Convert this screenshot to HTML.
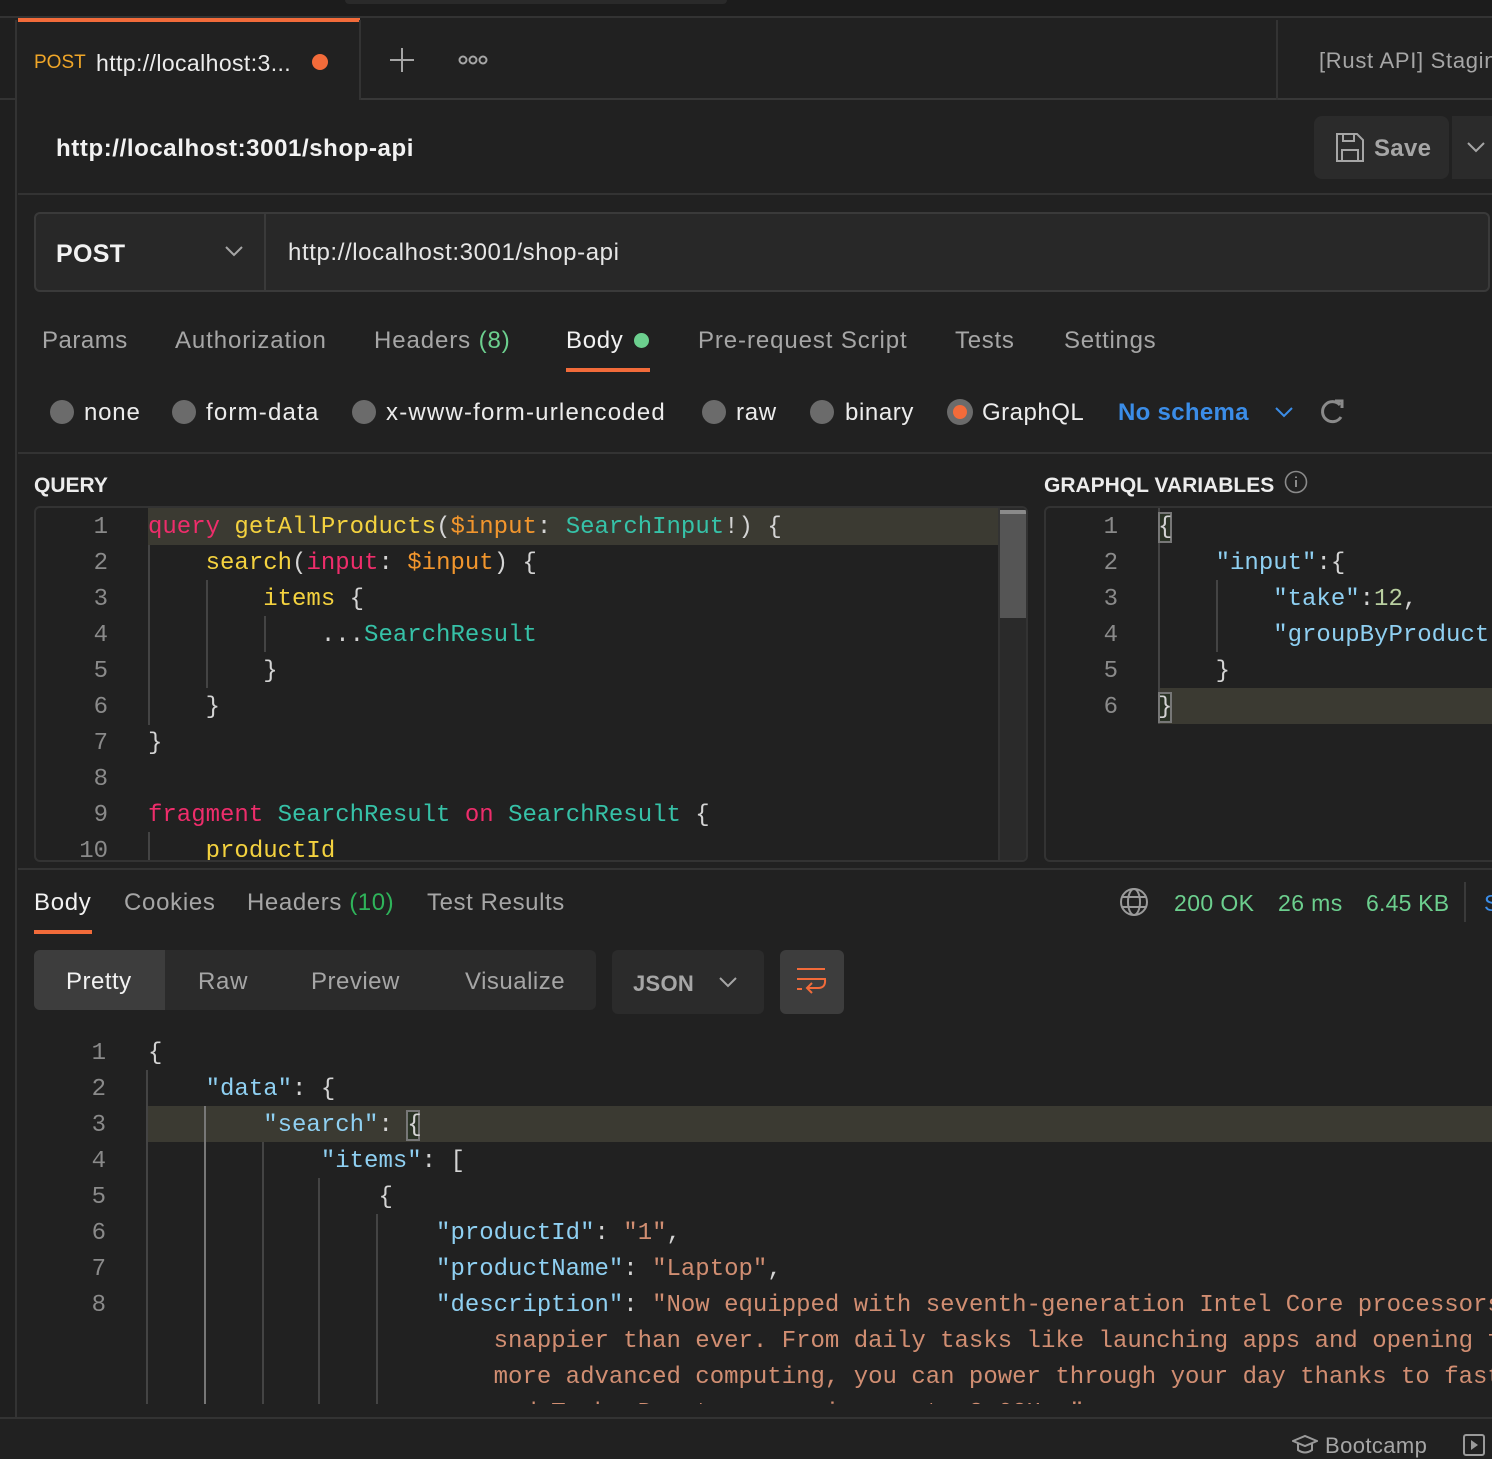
<!DOCTYPE html>
<html><head><meta charset="utf-8">
<style>
*{margin:0;padding:0;box-sizing:border-box}
body{width:1492px;height:1456px;background:#212121;overflow:hidden;position:relative;font-family:"Liberation Sans",sans-serif;color:#e6e6e6;letter-spacing:0.7px}
.a{position:absolute;white-space:nowrap}
pre.a{white-space:pre}
.mono{font-family:"Liberation Mono",monospace;font-size:24px;line-height:36px;letter-spacing:0}
.t{font-size:24px;color:#a6a6a6}
.ln{position:absolute;text-align:right;color:#8a8a8a;width:40px}
.pk{color:#ee2d6b}.yl{color:#f4d23f}.or{color:#f2962d}.tl{color:#36c2a8}.pu{color:#d4d4d4}
.ky{color:#8fd0f2}.st{color:#d18e72}.nm{color:#b9cfa0}
.guide{position:absolute;width:2px;background:#444}
.radio{position:absolute;width:24px;height:24px;border-radius:50%;background:#6b6b6b}
.rt{letter-spacing:1.2px}
</style></head><body>
<div class="a" style="left:0;top:0;width:1492px;height:18px;background:#1c1c1c;border-bottom:2px solid #333"></div>
<div class="a" style="left:345px;top:0;width:382px;height:4px;background:#2a2a2a;border-radius:0 0 6px 6px"></div>
<div class="a" style="left:0;top:20px;width:17px;height:1436px;background:#1f1f1f;border-right:2px solid #333"></div>
<div class="a" style="left:0;top:98px;width:17px;height:2px;background:#333"></div>
<div class="a" style="left:18px;top:18px;width:342px;height:4px;background:#f26b3a"></div>
<div class="a" style="left:359px;top:20px;width:2px;height:80px;background:#333"></div>
<div class="a" style="left:361px;top:98px;width:1131px;height:2px;background:#383838"></div>
<div class="a" style="left:1276px;top:20px;width:2px;height:80px;background:#333"></div>
<div class="a" style="left:34px;top:52px;font-size:19px;color:#f0a628;letter-spacing:0">POST</div>
<div class="a" style="left:96px;top:50px;font-size:23px;color:#ececec;letter-spacing:0.4px">http://localhost:3...</div>
<div class="a" style="left:312px;top:54px;width:16px;height:16px;border-radius:50%;background:#f26b3a"></div>
<svg class="a" style="left:388px;top:46px" width="28" height="28"><path d="M14 2V26M2 14H26" stroke="#a6a6a6" stroke-width="2"/></svg>
<svg class="a" style="left:458px;top:54px" width="32" height="12"><circle cx="5" cy="6" r="3.5" fill="none" stroke="#a6a6a6" stroke-width="2"/><circle cx="15" cy="6" r="3.5" fill="none" stroke="#a6a6a6" stroke-width="2"/><circle cx="25" cy="6" r="3.5" fill="none" stroke="#a6a6a6" stroke-width="2"/></svg>
<div class="a t" style="left:1319px;top:48px;font-size:22px">[Rust API] Staging</div>
<div class="a" style="left:56px;top:135px;font-size:24px;font-weight:bold;color:#f2f2f2;letter-spacing:0.6px">http://localhost:3001/shop-api</div>
<div class="a" style="left:1314px;top:116px;width:135px;height:63px;background:#2b2b2b;border-radius:8px"></div>
<svg class="a" style="left:1336px;top:133px" width="28" height="29"><path d="M1 1H21L27 7V28H1Z M7 1V8H18V1 M6 28V17H22V28" fill="none" stroke="#a6a6a6" stroke-width="2"/></svg>
<div class="a" style="left:1374px;top:135px;font-size:24px;font-weight:bold;color:#a6a6a6;letter-spacing:0.3px">Save</div>
<div class="a" style="left:1452px;top:116px;width:40px;height:63px;background:#2b2b2b"></div>
<svg class="a" style="left:1466px;top:140px" width="20" height="14"><path d="M2 3L10 11L18 3" fill="none" stroke="#a6a6a6" stroke-width="2"/></svg>
<div class="a" style="left:18px;top:193px;width:1474px;height:2px;background:#333"></div>
<div class="a" style="left:34px;top:212px;width:1456px;height:80px;background:#282828;border:2px solid #3a3a3a;border-radius:6px"></div>
<div class="a" style="left:264px;top:214px;width:2px;height:76px;background:#3a3a3a"></div>
<div class="a" style="left:56px;top:240px;font-size:25px;font-weight:bold;color:#f2f2f2;letter-spacing:0.3px">POST</div>
<svg class="a" style="left:224px;top:244px" width="20" height="14"><path d="M2 3L10 11L18 3" fill="none" stroke="#a6a6a6" stroke-width="2"/></svg>
<div class="a" style="left:288px;top:239px;font-size:24px;color:#e6e6e6;letter-spacing:0.6px">http://localhost:3001/shop-api</div>
<div class="a t" style="left:42px;top:327px;letter-spacing:0.5px">Params</div>
<div class="a t" style="left:175px;top:327px;letter-spacing:0.9px">Authorization</div>
<div class="a t" style="left:374px;top:327px;letter-spacing:0.9px">Headers <span style="color:#6ccf8e">(8)</span></div>
<div class="a" style="left:566px;top:327px;font-size:24px;color:#f2f2f2">Body</div>
<div class="a" style="left:634px;top:333px;width:15px;height:15px;border-radius:50%;background:#6ccf8e"></div>
<div class="a" style="left:566px;top:368px;width:84px;height:4px;background:#f26b3a"></div>
<div class="a t" style="left:698px;top:327px;letter-spacing:0.9px">Pre-request Script</div>
<div class="a t" style="left:955px;top:327px">Tests</div>
<div class="a t" style="left:1064px;top:327px">Settings</div>
<div class="radio" style="left:50px;top:400px"></div><div class="a rt" style="left:84px;top:399px;font-size:24px;color:#ececec;letter-spacing:0.8px">none</div>
<div class="radio" style="left:172px;top:400px"></div><div class="a rt" style="left:206px;top:399px;font-size:24px;color:#ececec">form-data</div>
<div class="radio" style="left:352px;top:400px"></div><div class="a rt" style="left:386px;top:399px;font-size:24px;color:#ececec">x-www-form-urlencoded</div>
<div class="radio" style="left:702px;top:400px"></div><div class="a rt" style="left:736px;top:399px;font-size:24px;color:#ececec;letter-spacing:0.7px">raw</div>
<div class="radio" style="left:810px;top:400px"></div><div class="a rt" style="left:845px;top:399px;font-size:24px;color:#ececec;letter-spacing:0.6px">binary</div>
<div class="radio" style="left:947px;top:399px;background:#6b6b6b;width:26px;height:26px"><div style="position:absolute;left:6px;top:6px;width:14px;height:14px;border-radius:50%;background:#f26b3a"></div></div>
<div class="a" style="left:982px;top:399px;font-size:24px;color:#ececec;letter-spacing:0.5px">GraphQL</div>
<div class="a" style="left:1118px;top:399px;font-size:24px;font-weight:bold;color:#3b8de8;letter-spacing:0.3px">No schema</div>
<svg class="a" style="left:1274px;top:405px" width="20" height="14"><path d="M2 3L10 11L18 3" fill="none" stroke="#3b8de8" stroke-width="2"/></svg>
<svg class="a" style="left:1318px;top:398px" width="28" height="28"><path d="M22 7A10 10 0 1 0 23 19" fill="none" stroke="#8a8a8a" stroke-width="3"/><path d="M17 3H24V10" fill="none" stroke="#8a8a8a" stroke-width="3"/></svg>
<div class="a" style="left:18px;top:452px;width:1474px;height:2px;background:#333"></div>
<div class="a" style="left:34px;top:474px;font-size:21px;font-weight:bold;color:#ececec;letter-spacing:0">QUERY</div>
<div class="a" style="left:1044px;top:474px;font-size:21px;font-weight:bold;color:#ececec;letter-spacing:0">GRAPHQL VARIABLES</div>
<svg class="a" style="left:1284px;top:470px" width="24" height="24"><circle cx="12" cy="12" r="10.5" fill="none" stroke="#8a8a8a" stroke-width="1.6"/><path d="M12 10V17M12 6.5V8" stroke="#8a8a8a" stroke-width="2"/></svg>
<div class="a" style="left:34px;top:506px;width:994px;height:356px;border:2px solid #333;border-radius:6px;overflow:hidden">
 <div class="a" style="left:112px;top:0;width:850px;height:37px;background:#3b3a32"></div>
 <div class="a" style="left:962px;top:0;width:30px;height:356px;background:#2a2a2a;border-left:2px solid #333"></div>
 <div class="a" style="left:964px;top:2px;width:26px;height:108px;background:#555"></div>
 <div class="a" style="left:964px;top:2px;width:26px;height:4px;background:#8a8a8a"></div>
 <div class="guide" style="left:112px;top:37px;height:180px"></div>
 <div class="guide" style="left:170px;top:72px;height:108px"></div>
 <div class="guide" style="left:228px;top:108px;height:36px"></div>
 <div class="guide" style="left:112px;top:324px;height:36px"></div>
 <div class="a mono" style="left:0;top:2px">
  <div class="ln" style="left:32px;top:0">1</div><div class="ln" style="left:32px;top:36px">2</div><div class="ln" style="left:32px;top:72px">3</div><div class="ln" style="left:32px;top:108px">4</div><div class="ln" style="left:32px;top:144px">5</div><div class="ln" style="left:32px;top:180px">6</div><div class="ln" style="left:32px;top:216px">7</div><div class="ln" style="left:32px;top:252px">8</div><div class="ln" style="left:32px;top:288px">9</div><div class="ln" style="left:32px;top:324px">10</div>
 </div>
 <pre class="a mono pu" style="left:112px;top:2px"><span class="pk">query</span> <span class="yl">getAllProducts</span>(<span class="or">$input</span>: <span class="tl">SearchInput</span>!) {
    <span class="yl">search</span>(<span class="pk">input</span>: <span class="or">$input</span>) {
        <span class="yl">items</span> {
            ...<span class="tl">SearchResult</span>
        }
    }
}

<span class="pk">fragment</span> <span class="tl">SearchResult</span> <span class="pk">on</span> <span class="tl">SearchResult</span> {
    <span class="yl">productId</span></pre>
</div>
<div class="a" style="left:1044px;top:506px;width:460px;height:356px;border:2px solid #333;border-radius:6px;overflow:hidden">
 <div class="a" style="left:112px;top:180px;width:360px;height:36px;background:#3b3a32"></div>
 <div class="guide" style="left:112px;top:0;height:216px;background:#444"></div>
 <div class="guide" style="left:170px;top:72px;height:72px"></div>
 <div class="a" style="left:112px;top:4px;width:14px;height:31px;border:2px solid #777;background:#2a3325"></div>
 <div class="a" style="left:112px;top:184px;width:14px;height:31px;border:2px solid #777;background:#2a3325"></div>
 <div class="a mono" style="top:2px">
  <div class="ln" style="left:32px;top:0">1</div><div class="ln" style="left:32px;top:36px">2</div><div class="ln" style="left:32px;top:72px">3</div><div class="ln" style="left:32px;top:108px">4</div><div class="ln" style="left:32px;top:144px">5</div><div class="ln" style="left:32px;top:180px">6</div>
 </div>
 <pre class="a mono pu" style="left:112px;top:2px">{
    <span class="ky">"input"</span>:{
        <span class="ky">"take"</span>:<span class="nm">12</span>,
        <span class="ky">"groupByProduct"</span>:true
    }
}</pre>
</div>
<div class="a" style="left:18px;top:868px;width:1474px;height:2px;background:#333"></div>
<div class="a" style="left:34px;top:889px;font-size:24px;color:#f2f2f2">Body</div>
<div class="a" style="left:34px;top:930px;width:58px;height:4px;background:#f26b3a"></div>
<div class="a t" style="left:124px;top:889px">Cookies</div>
<div class="a t" style="left:247px;top:889px;letter-spacing:0.6px">Headers <span style="color:#2fb35a">(10)</span></div>
<div class="a t" style="left:427px;top:889px;letter-spacing:0.6px">Test Results</div>
<svg class="a" style="left:1119px;top:887px" width="30" height="30"><g fill="none" stroke="#9a9a9a" stroke-width="2"><circle cx="15" cy="15" r="13"/><ellipse cx="15" cy="15" rx="6" ry="13"/><path d="M3 10H27M3 20H27"/></g></svg>
<div class="a" style="left:1174px;top:890px;font-size:23px;color:#6ccf8e;letter-spacing:0.4px">200 OK</div>
<div class="a" style="left:1278px;top:890px;font-size:23px;color:#6ccf8e;letter-spacing:0.4px">26 ms</div>
<div class="a" style="left:1366px;top:890px;font-size:23px;color:#6ccf8e;letter-spacing:0.2px">6.45 KB</div>
<div class="a" style="left:1464px;top:882px;width:2px;height:40px;background:#3a3a3a"></div>
<div class="a" style="left:1484px;top:890px;font-size:23px;color:#3b8de8">S</div>
<div class="a" style="left:34px;top:950px;width:562px;height:60px;background:#2b2b2b;border-radius:6px"></div>
<div class="a" style="left:34px;top:950px;width:131px;height:60px;background:#3d3d3d;border-radius:6px 0 0 6px"></div>
<div class="a" style="left:66px;top:968px;font-size:24px;color:#f2f2f2;letter-spacing:0.5px">Pretty</div>
<div class="a t" style="left:198px;top:968px">Raw</div>
<div class="a t" style="left:311px;top:968px;letter-spacing:0.5px">Preview</div>
<div class="a t" style="left:465px;top:968px;letter-spacing:0.5px">Visualize</div>
<div class="a" style="left:612px;top:950px;width:152px;height:64px;background:#2b2b2b;border-radius:6px"></div>
<div class="a" style="left:633px;top:971px;font-size:22px;font-weight:bold;color:#a6a6a6;letter-spacing:0.3px">JSON</div>
<svg class="a" style="left:718px;top:975px" width="20" height="14"><path d="M2 3L10 11L18 3" fill="none" stroke="#a6a6a6" stroke-width="2"/></svg>
<div class="a" style="left:780px;top:950px;width:64px;height:64px;background:#3d3d3d;border-radius:6px"></div>
<svg class="a" style="left:796px;top:966px" width="32" height="32"><g fill="none" stroke="#f26b3a" stroke-width="2"><path d="M1 3H29M1 13H29Q30 22 22 22H12M16 17L11 22L16 27M1 23H6"/></g></svg>
<div class="a" style="left:18px;top:1034px;width:1474px;height:370px;overflow:hidden">
 <div class="a" style="left:130px;top:72px;width:1350px;height:36px;background:#3b3a32"></div>
 <div class="guide" style="left:128px;top:36px;height:340px"></div>
 <div class="guide" style="left:186px;top:72px;height:300px;background:#777"></div>
 <div class="guide" style="left:244px;top:108px;height:270px"></div>
 <div class="guide" style="left:300px;top:144px;height:230px"></div>
 <div class="guide" style="left:358px;top:180px;height:200px"></div>
 <div class="a" style="left:388px;top:76px;width:14px;height:31px;border:2px solid #777;background:#2a3325"></div>
 <div class="a mono" style="top:2px">
  <div class="ln" style="left:48px;top:0">1</div><div class="ln" style="left:48px;top:36px">2</div><div class="ln" style="left:48px;top:72px">3</div><div class="ln" style="left:48px;top:108px">4</div><div class="ln" style="left:48px;top:144px">5</div><div class="ln" style="left:48px;top:180px">6</div><div class="ln" style="left:48px;top:216px">7</div><div class="ln" style="left:48px;top:252px">8</div>
 </div>
 <pre class="a mono pu" style="left:130px;top:2px">{
    <span class="ky">"data"</span>: {
        <span class="ky">"search"</span>: {
            <span class="ky">"items"</span>: [
                {
                    <span class="ky">"productId"</span>: <span class="st">"1"</span>,
                    <span class="ky">"productName"</span>: <span class="st">"Laptop"</span>,
                    <span class="ky">"description"</span>: <span class="st">"Now equipped with seventh-generation Intel Core processors, Laptop is</span>
<span class="st">                        snappier than ever. From daily tasks like launching apps and opening files to</span>
<span class="st">                        more advanced computing, you can power through your day thanks to faster SSDs</span>
<span class="st">                        and Turbo Boost processing up to 3.6GHz."</span></pre>
</div>
<div class="a" style="left:0;top:1417px;width:1492px;height:2px;background:#333"></div>
<div class="a" style="left:0;top:1419px;width:1492px;height:37px;background:#212121"></div>
<svg class="a" style="left:1292px;top:1434px" width="26" height="22"><g fill="none" stroke="#9a9a9a" stroke-width="2"><path d="M1 7L13 2L25 7L13 12Z"/><path d="M6 9V16Q13 21 20 16V9"/></g></svg>
<div class="a" style="left:1325px;top:1433px;font-size:22px;color:#a6a6a6;letter-spacing:0.4px">Bootcamp</div>
<svg class="a" style="left:1463px;top:1434px" width="22" height="22"><rect x="1" y="1" width="20" height="20" rx="2" fill="none" stroke="#9a9a9a" stroke-width="2"/><path d="M8 6L15 11L8 16Z" fill="#9a9a9a"/></svg>
</body></html>
